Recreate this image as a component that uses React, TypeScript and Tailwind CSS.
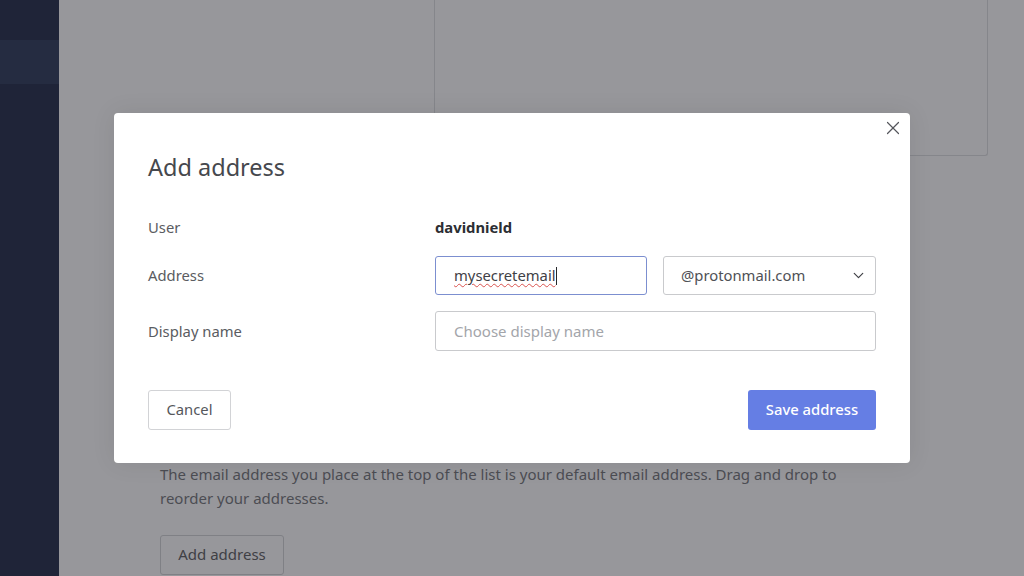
import React from "react";
import { ChevronDown, X } from "lucide-react";

const font = "font-['Noto_Sans','Open_Sans',sans-serif]";

function AddAddressModal() {
  return (
    <div className="absolute left-[114px] top-[113px] w-[796px] h-[350px] rounded-[4px] bg-white px-[34px] shadow-[0_0_24px_rgba(0,0,0,0.08)]">
      <button className="absolute right-[6px] top-[4px] text-[#55565c]">
        <X size={22} strokeWidth={1.3} />
      </button>

      <h1 className="mt-[36px] h-[36px] text-[23.5px] leading-[36px] text-[#46484d]">
        Add address
      </h1>

      <div className="mt-[30px] grid grid-cols-[287px_1fr] text-[14.8px] text-[#5a5c61]">
        <div className="h-[24px] leading-[24px]">User</div>
        <div className="h-[24px] leading-[24px] font-bold text-[#2c2e33]">
          davidnield
        </div>

        <div className="mt-[17px] h-[39px] leading-[38px]">Address</div>
        <div className="mt-[17px] flex gap-[16px]">
          <div className="h-[39px] w-[212px] rounded-[3px] border border-[#7c8fd0] pl-[18px] leading-[36px] text-[#3f4146]">
            <span className="underline decoration-wavy decoration-[#d9534f] decoration-1 underline-offset-2">
              mysecretemail
            </span>
            <span className="inline-block h-[18px] w-px translate-y-[4px] bg-[#26282c]" />
          </div>
          <div className="flex h-[39px] w-[213px] items-center justify-between rounded-[3px] border border-[#c9cacd] pl-[17px] pr-[8px] text-[#4f5156]">
            <span>@protonmail.com</span>
            <ChevronDown size={17} strokeWidth={1.7} className="text-[#3f4146]" />
          </div>
        </div>

        <div className="mt-[16px] h-[40px] leading-[40px]">Display name</div>
        <div className="mt-[16px] h-[40px] rounded-[3px] border border-[#c9cacd] pl-[18px] text-[15px] leading-[38px] text-[#a3a5aa]">
          Choose display name
        </div>
      </div>

      <div className="mt-[39px] flex justify-between text-[14.8px]">
        <button className="h-[40px] w-[83px] rounded-[3px] border border-[#d2d3d6] pb-[2px] text-[#55575c]">
          Cancel
        </button>
        <button className="h-[40px] w-[128px] rounded-[3px] bg-[#657ee4] pb-[2px] font-medium text-white">
          Save address
        </button>
      </div>
    </div>
  );
}

export default function App() {
  return (
    <div className={`relative flex h-[576px] w-[1024px] overflow-hidden bg-[#97979b] ${font}`}>
      <aside className="w-[59px] shrink-0 bg-[#1f2438] pt-[40px]">
        <div className="h-[44px] bg-[#252c41]" />
      </aside>

      <main className="flex-1 pl-[101px] pr-[36px] text-[15px] text-[#4c4d53]">
        <div className="ml-[274px] h-[156px] rounded-b-[3px] border border-t-0 border-[#85868b]" />
        <p className="mt-[306px] w-[690px] leading-[24px]">
          The email address you place at the top of the list is your default email address. Drag and drop to reorder your addresses.
        </p>
        <button className="mt-[25px] h-[40px] w-[124px] rounded-[3px] border border-[#7f8085] pb-[2px] text-[#3f4045]">
          Add address
        </button>
      </main>

      <AddAddressModal />
    </div>
  );
}
